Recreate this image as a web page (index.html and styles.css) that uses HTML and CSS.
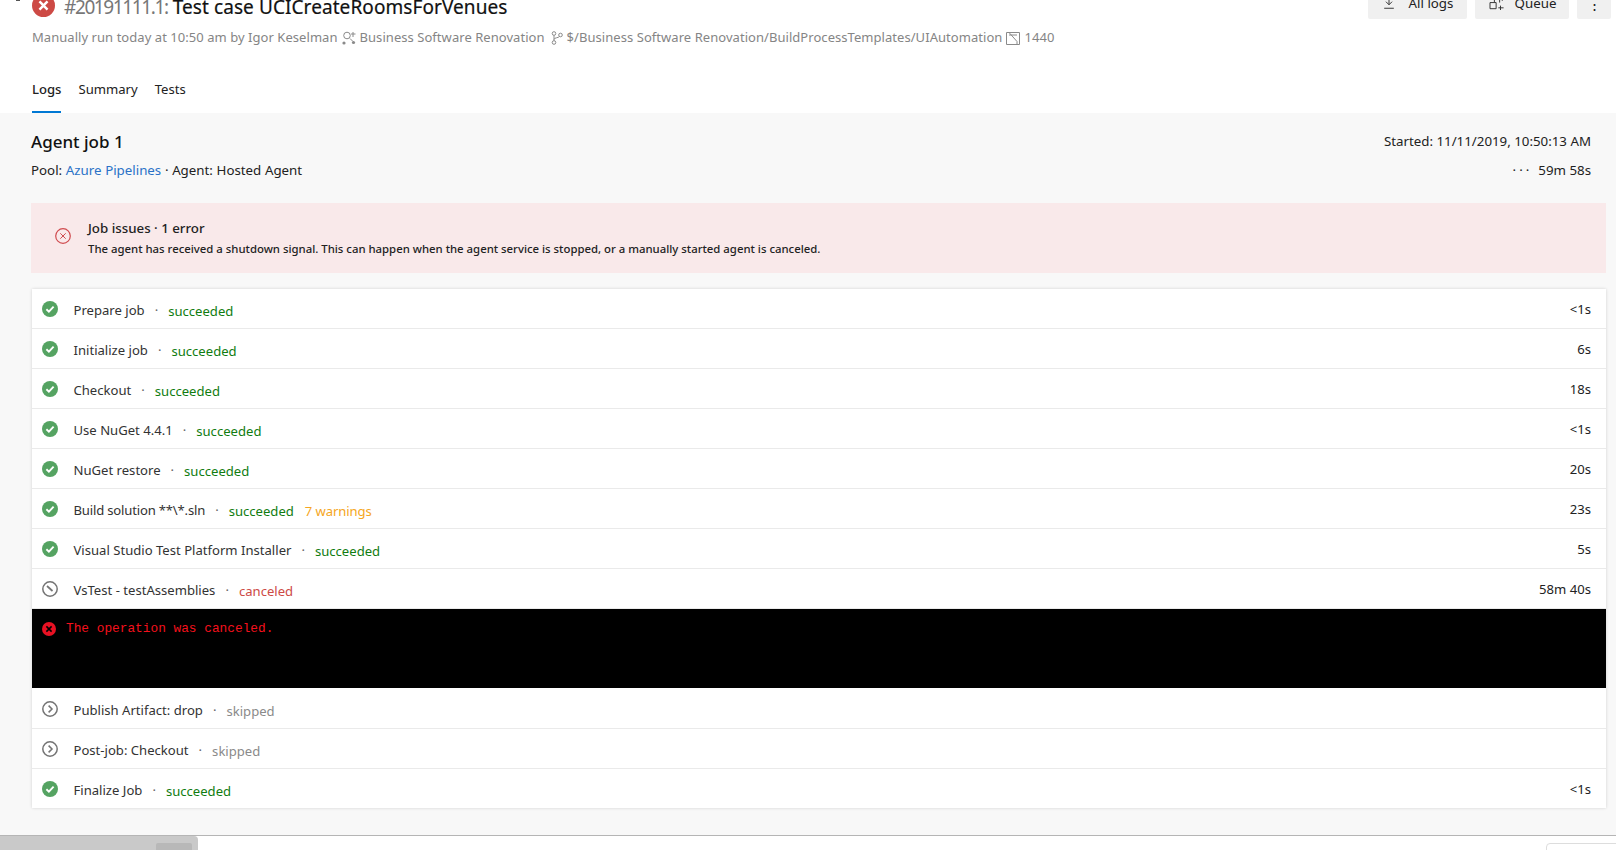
FILE: index.html
```html
<!DOCTYPE html>
<html lang="en">
<head>
<meta charset="utf-8">
<title>Test case UCICreateRoomsForVenues</title>
<link rel="stylesheet" href="styles.css">
</head>
<body>
<svg class="defs" width="0" height="0" aria-hidden="true">
  <symbol id="ok" viewBox="0 0 16 16"><circle cx="8" cy="8" r="8" fill="#55a362"/><path d="M4.400 8.300l2.500 2.400 4.700-5" fill="none" stroke="#fff" stroke-width="1.900"/></symbol>
  <symbol id="cancel" viewBox="0 0 16 16"><circle cx="8" cy="8" r="7.200" fill="none" stroke="#747474" stroke-width="1.500"/><path d="M5 5l5.500 5" fill="none" stroke="#747474" stroke-width="1.700"/></symbol>
  <symbol id="skip" viewBox="0 0 16 16"><circle cx="8" cy="8" r="7.200" fill="none" stroke="#747474" stroke-width="1.500"/><path d="M6.600 4.600L10 8l-3.400 3.400" fill="none" stroke="#747474" stroke-width="1.500"/></symbol>
</svg>
<div class="page">
  <header class="header">
    <div class="top">
      <span class="back"></span>
      <svg class="run-icon" viewBox="0 0 24 24"><circle cx="12" cy="12" r="12" fill="#cd4a45"/><path d="M7.800 7.800l8.400 8.400M16.200 7.800l-8.400 8.400" stroke="#fff" stroke-width="2.600"/></svg>
      <h1 class="title"><span class="run-no">#20191111.1:</span> Test case UCICreateRoomsForVenues</h1>
      <div class="actions">
        <button class="btn btn-logs"><svg class="btn-icon" viewBox="0 0 16 16"><path d="M8 1v9M4.500 6.500L8 10l3.500-3.500M2.500 14h11" fill="none" stroke="#333" stroke-width="1.100"/></svg>All logs</button>
        <button class="btn btn-queue"><svg class="btn-icon wide" viewBox="0 0 18 16"><path d="M1 7.500h7v7H1zM6 7V2h6v5.500M12 2h3v3.500M13 11v5M10.500 13.500h6" fill="none" stroke="#333" stroke-width="1.100"/></svg>Queue</button>
        <button class="btn btn-more">⋮</button>
      </div>
    </div>
    <div class="meta">
      <span>Manually run today at 10:50 am by Igor Keselman</span>
      <svg class="meta-icon" viewBox="0 0 14 14"><circle cx="5" cy="4.500" r="3.300" fill="none" stroke="#8a8a8a"/><circle cx="2" cy="12" r="1.600" fill="#8a8a8a"/><circle cx="11.500" cy="11.500" r="1.600" fill="#8a8a8a"/><path d="M11 1v5M9 3h4.500" stroke="#8a8a8a"/><path d="M8 7.500l3 3" stroke="#8a8a8a"/></svg>
      <span>Business Software Renovation</span>
      <svg class="meta-icon branch" viewBox="0 0 12 14"><circle cx="3" cy="2.500" r="1.800" fill="none" stroke="#8a8a8a"/><circle cx="3" cy="11.500" r="1.800" fill="none" stroke="#8a8a8a"/><circle cx="9.500" cy="4" r="1.800" fill="none" stroke="#8a8a8a"/><path d="M3 4.300v5.400M3 8.500c0-2 4.500-1.500 5.500-3" fill="none" stroke="#8a8a8a"/></svg>
      <span>$/Business Software Renovation/BuildProcessTemplates/UIAutomation</span>
      <svg class="meta-icon" viewBox="0 0 14 14"><path d="M.5 1.500h13v12H.5zM3 1.500l8 9v3M3 4h8" fill="none" stroke="#8a8a8a"/></svg>
      <span>1440</span>
    </div>
    <nav class="tabs">
      <a class="tab active">Logs</a>
      <a class="tab">Summary</a>
      <a class="tab">Tests</a>
    </nav>
  </header>
  <main class="main">
    <div class="job-head">
      <div class="job-row">
        <h2 class="job-title">Agent job 1</h2>
        <span class="plain">Started: 11/11/2019, 10:50:13 AM</span>
      </div>
      <div class="job-row second">
        <span class="plain pool">Pool: <a class="link">Azure Pipelines</a> · Agent: Hosted Agent</span>
        <span class="plain"><span class="more">···</span>59m 58s</span>
      </div>
    </div>
    <section class="issues">
      <svg class="issue-icon" viewBox="0 0 16 16"><circle cx="8" cy="8" r="7.300" fill="none" stroke="#d04c50" stroke-width="1.200"/><path d="M5.300 5.300l5.400 5.400M10.700 5.300l-5.400 5.400" stroke="#d04c50"/></svg>
      <div>
        <div class="issue-title">Job issues · 1 error</div>
        <div class="issue-msg">The agent has received a shutdown signal. This can happen when the agent service is stopped, or a manually started agent is canceled.</div>
      </div>
    </section>
    <section class="steps">
      <div class="step"><svg class="step-icon"><use href="#ok"/></svg><span class="name">Prepare job</span><span class="dot">·</span><span class="ok">succeeded</span><span class="time">&lt;1s</span></div>
      <div class="step"><svg class="step-icon"><use href="#ok"/></svg><span class="name">Initialize job</span><span class="dot">·</span><span class="ok">succeeded</span><span class="time">6s</span></div>
      <div class="step"><svg class="step-icon"><use href="#ok"/></svg><span class="name">Checkout</span><span class="dot">·</span><span class="ok">succeeded</span><span class="time">18s</span></div>
      <div class="step"><svg class="step-icon"><use href="#ok"/></svg><span class="name">Use NuGet 4.4.1</span><span class="dot">·</span><span class="ok">succeeded</span><span class="time">&lt;1s</span></div>
      <div class="step"><svg class="step-icon"><use href="#ok"/></svg><span class="name">NuGet restore</span><span class="dot">·</span><span class="ok">succeeded</span><span class="time">20s</span></div>
      <div class="step"><svg class="step-icon"><use href="#ok"/></svg><span class="name tight">Build solution **\*.sln</span><span class="dot">·</span><span class="ok">succeeded</span><span class="warn">7 warnings</span><span class="time">23s</span></div>
      <div class="step"><svg class="step-icon"><use href="#ok"/></svg><span class="name">Visual Studio Test Platform Installer</span><span class="dot">·</span><span class="ok">succeeded</span><span class="time">5s</span></div>
      <div class="step"><svg class="step-icon"><use href="#cancel"/></svg><span class="name">VsTest - testAssemblies</span><span class="dot">·</span><span class="bad">canceled</span><span class="time">58m 40s</span></div>
      <div class="console">
        <svg class="console-icon" viewBox="0 0 14 14"><circle cx="7" cy="7" r="7" fill="#e81123"/><path d="M4.400 4.400l5.200 5.200M9.600 4.400l-5.200 5.200" stroke="#000" stroke-width="1.500"/></svg>
        <span>The operation was canceled.</span>
      </div>
      <div class="step"><svg class="step-icon"><use href="#skip"/></svg><span class="name">Publish Artifact: drop</span><span class="dot">·</span><span class="skipped">skipped</span></div>
      <div class="step"><svg class="step-icon"><use href="#skip"/></svg><span class="name">Post-job: Checkout</span><span class="dot">·</span><span class="skipped">skipped</span></div>
      <div class="step"><svg class="step-icon"><use href="#ok"/></svg><span class="name">Finalize Job</span><span class="dot">·</span><span class="ok">succeeded</span><span class="time">&lt;1s</span></div>
    </section>
  </main>
  <footer class="footer">
    <div class="scroll"><span class="thumb"></span></div>
    <span class="corner"></span>
  </footer>
</div>
</body>
</html>
```
FILE: styles.css
```css
* { box-sizing: border-box; }
html, body { margin: 0; height: 850px; overflow: hidden; background: #fff; }
body { font-family: "Noto Sans", "Open Sans", sans-serif; font-size: 13.3px; color: #222; }
.defs { position: absolute; }
.page { display: flex; flex-direction: column; height: 850px; }

.header { height: 113px; flex: none; background: #fff; padding: 0 5px 0 32px; display: flex; flex-direction: column; }
.top { display: flex; align-items: flex-start; height: 32px; margin-top: -13px; position: relative; }
.back { position: absolute; left: -16px; top: 12px; width: 4px; height: 2px; background: #555; }
.run-icon { width: 23px; height: 23px; margin: 7px 9px 0 0; flex: none; }
.title { margin: 6px 0 0 0; font-size: 19px; line-height: 28px; font-weight: 400; color: #111; letter-spacing: 0.08px; -webkit-text-stroke: 0.2px #111; }
.run-no { color: #777; -webkit-text-stroke: 0; letter-spacing: -1.38px; }
.actions { margin-left: auto; display: flex; gap: 8px; }
.btn { height: 32px; border: 0; border-radius: 2px; background: #f0f0f0; font: inherit; font-size: 13.3px; color: #222; display: flex; align-items: center; justify-content: center; padding: 0; }
.btn-logs { width: 99px; }
.btn-queue { width: 94px; }
.btn-more { width: 34px; font-size: 15px; }
.btn-icon { width: 14px; height: 14px; margin-right: 13px; }
.btn-icon.wide { width: 18px; margin-right: 9px; }

.meta { margin-top: 9px; height: 18px; display: flex; align-items: center; color: #858585; white-space: nowrap; font-size: 13px; letter-spacing: 0.05px; }
.meta-icon { width: 14px; height: 14px; margin: 2px 4px 0 4px; flex: none; }
.meta-icon.branch { width: 12px; margin: 2px 4px 0 6px; }

.tabs { margin-top: auto; display: flex; gap: 17px; }
.tab { height: 34px; padding-top: 0; font-size: 13.1px; color: #222; line-height: 20px; border-bottom: 2px solid transparent; }
.tab.active { border-bottom-color: #0078d4; font-weight: 500; }

.main { flex: 1; background: #f8f8f8; padding: 0 10px 0 31px; min-height: 0; }
.job-head { padding-top: 16px; height: 90px; }
.job-row { display: flex; justify-content: space-between; align-items: center; padding-right: 15px; height: 24px; }
.job-row.second { margin-top: 5px; }
.job-title { margin: 0; font-size: 17px; font-weight: 500; color: #111; }
.plain { color: #222; font-size: 13.3px; }
.pool { word-spacing: 0.2px; }
.link { color: #2a72c7; }
.more { letter-spacing: 3px; margin-right: 6px; }

.issues { height: 70px; background: #f9e9ea; display: flex; align-items: center; padding-left: 24px; gap: 17px; }
.issue-icon { width: 16px; height: 16px; flex: none; margin-top: -4px; }
.issue-title { font-size: 13.3px; font-weight: 500; line-height: 20px; }
.issue-msg { font-size: 11.37px; font-weight: 500; line-height: 21px; color: #222; }

.steps { margin: 16px 0 0 1px; background: #fff; box-shadow: 0 0 3px rgba(0,0,0,.16); }
.step { height: 40px; border-bottom: 1px solid #eaeaea; display: flex; align-items: center; padding: 2px 15px 0 10px; font-size: 13.1px; }
.step:last-child { border-bottom: 0; height: 39px; }
.step-icon { width: 16px; height: 16px; margin: -2px 15.5px 0 0; flex: none; }
.name { color: #333; margin-top: 1px; }
.name.tight { letter-spacing: -0.18px; }
.dot { color: #666; margin: 0 10px; }
.ok, .warn, .bad, .skipped { margin-top: 3px; }
.ok { color: #107c10; }
.warn { color: #f5a623; margin-left: 11px; letter-spacing: -0.1px; }
.bad { color: #cd4a45; }
.skipped { color: #8a8a8a; }
.time { margin-left: auto; color: #222; margin-top: -1px; }

.console { height: 80px; background: #000; border-bottom: 1px solid #fff; color: #f5101c; font-family: "Liberation Mono", monospace; font-size: 12.8px; display: flex; align-items: flex-start; padding: 12px 0 0 10px; gap: 10px; }
.console-icon { width: 14px; height: 14px; flex: none; margin-top: 1px; }

.footer { height: 15px; flex: none; border-top: 1px solid #b5b5b5; background: #fff; position: relative; }
.scroll { width: 198px; height: 100%; background: #c9c9c9; border-radius: 0 4px 0 0; padding: 7px 0 0 156px; }
.thumb { display: block; width: 36px; height: 8px; background: #b8b8b8; border-radius: 2px 2px 0 0; }
.corner { position: absolute; right: -4px; top: 7px; width: 74px; height: 12px; border: 1px solid #ddd; border-radius: 4px 0 0 0; }
```
